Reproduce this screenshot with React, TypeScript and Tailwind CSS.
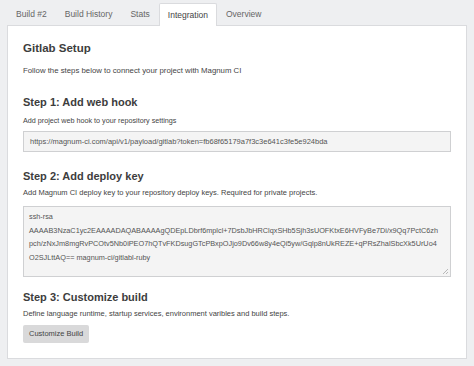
import React from "react";

const tabs = ["Build #2", "Build History", "Stats", "Integration", "Overview"];

export default function App() {
  return (
    <div
      className="w-[474px] h-[366px] bg-[#eeeff1] overflow-hidden text-[#333]"
      style={{ fontFamily: '"Liberation Sans", Arial, sans-serif' }}
    >
      <div className="flex pl-[7px] pt-[3px] h-[25px]">
        {tabs.map((t) => (
          <div
            key={t}
            className={
              t === "Integration"
                ? "px-[8px] h-[23px] flex items-center text-[8.5px] text-[#444] bg-white border border-b-0 border-[#dadbde] rounded-t-[2px] mb-[-1px] relative z-10"
                : "px-[9px] h-[22px] flex items-center text-[8.5px] text-[#666]"
            }
          >
            {t}
          </div>
        ))}
      </div>
      <div className="mx-[7px] bg-white border border-[#dadbde] h-[334px] px-[15px] pt-[13px]">
        <div className="text-[11.5px] font-bold text-[#3d3d3d] leading-[18px]">Gitlab Setup</div>
        <div className="text-[7.8px] text-[#444] mt-[8px] leading-[12px]">
          Follow the steps below to connect your project with Magnum CI
        </div>
        <div className="text-[11px] font-bold text-[#3d3d3d] mt-[17px] leading-[16px]">Step 1: Add web hook</div>
        <div className="text-[7.2px] text-[#444] mt-[5px] leading-[11px]">
          Add project web hook to your repository settings
        </div>
        <div className="mt-[5px] w-[428px] h-[21px] border border-[#cfd0d2] bg-[#f4f4f4] flex items-center px-[6px] text-[7.5px] text-[#555]">
          https://magnum-ci.com/api/v1/payload/gitlab?token=fb68f65179a7f3c3e641c3fe5e924bda
        </div>
        <div className="text-[11px] font-bold text-[#3d3d3d] mt-[16px] leading-[16px]">Step 2: Add deploy key</div>
        <div className="text-[7.5px] text-[#444] mt-[3px] leading-[11px]">
          Add Magnum CI deploy key to your repository deploy keys. Required for private projects.
        </div>
        <div className="relative mt-[8px] w-[428px] h-[71px] border border-[#cfd0d2] bg-[#f4f4f4] px-[5px] pt-[3px] text-[7.3px] text-[#555] leading-[13.5px] whitespace-nowrap overflow-hidden">
          <div>ssh-rsa</div>
          <div>AAAAB3NzaC1yc2EAAAADAQABAAAAgQDEpLDbrf6mplcl+7DsbJbHRClqxSHb5Sjh3sUOFKtxE6HVFyBe7Di/x9Qq7PctC6zh</div>
          <div>pch/zNxJm8mgRvPCOtv5Nb0iPEO7hQTvFKDsugGTcPBxpOJjo9Dv66w8y4eQi5yw/Gqlp8nUkREZE+qPRsZhalSbcXk5UrUo4</div>
          <div>O2SJLttAQ== magnum-ci/gitlabl-ruby</div>
          <svg className="absolute right-[1px] bottom-[1px]" width="7" height="7" viewBox="0 0 7 7">
            <path d="M6 1 L1 6 M6 4 L4 6" stroke="#aaa" strokeWidth="0.8" />
          </svg>
        </div>
        <div className="text-[11px] font-bold text-[#3d3d3d] mt-[12px] leading-[16px]">Step 3: Customize build</div>
        <div className="text-[7.5px] text-[#444] mt-[3px] leading-[11px]">
          Define language runtime, startup services, environment varibles and build steps.
        </div>
        <button className="mt-[5px] h-[18px] px-[6px] bg-[#d9d9da] rounded-[2px] text-[7.5px] text-[#444]">
          Customize Build
        </button>
      </div>
    </div>
  );
}
